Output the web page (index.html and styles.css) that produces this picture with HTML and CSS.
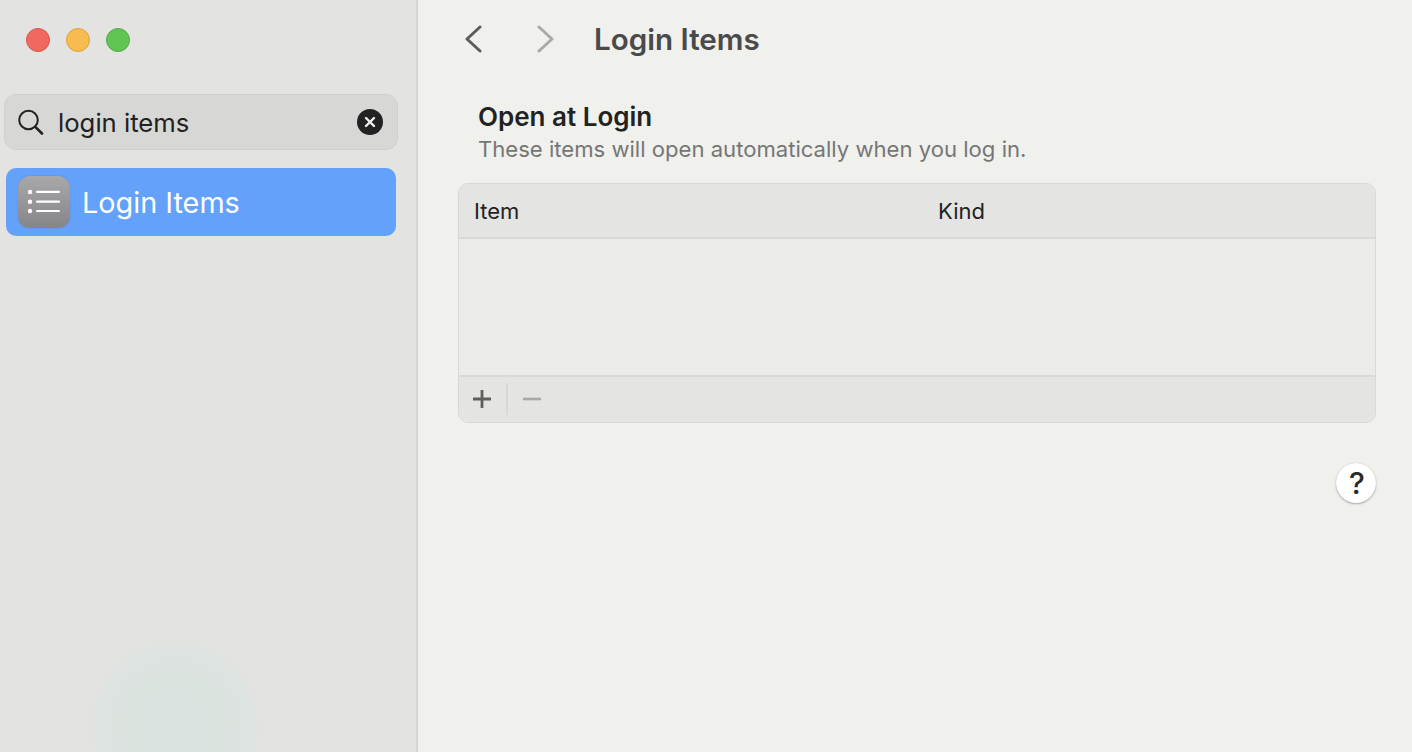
FILE: index.html
```html
<!DOCTYPE html>
<html lang="en">
<head>
<meta charset="utf-8">
<title>Login Items</title>
<link rel="stylesheet" href="styles.css">
</head>
<body>
<div class="window">
  <aside class="sidebar">
    <div class="traffic">
      <span class="light red"></span>
      <span class="light yellow"></span>
      <span class="light green"></span>
    </div>
    <div class="search">
      <svg class="search-icon" viewBox="0 0 28 28" width="28" height="28" aria-hidden="true">
        <circle cx="11.5" cy="12" r="9.3" fill="none" stroke="#222" stroke-width="2"/>
        <path d="M18.3 18.8L25 25.5" fill="none" stroke="#222" stroke-width="2.6" stroke-linecap="round"/>
      </svg>
      <span class="search-text">login items</span>
      <svg class="clear-icon" viewBox="0 0 26 26" width="26" height="26" aria-hidden="true">
        <circle cx="13" cy="13" r="13" fill="#222"/>
        <path d="M9 9L17 17M17 9L9 17" fill="none" stroke="#f2f2f2" stroke-width="2.4" stroke-linecap="round"/>
      </svg>
    </div>
    <div class="result">
      <span class="app-icon">
        <svg viewBox="0 0 52 52" width="52" height="52" aria-hidden="true">
          <g fill="#fff">
            <circle cx="12" cy="16" r="2.2"/>
            <circle cx="12" cy="25.7" r="2.2"/>
            <circle cx="12" cy="35" r="2.2"/>
            <rect x="18" y="14.8" width="24" height="2.2" rx="1"/>
            <rect x="18" y="24.6" width="24" height="2.2" rx="1"/>
            <rect x="18" y="33.9" width="24" height="2.2" rx="1"/>
          </g>
        </svg>
      </span>
      <span class="result-label">Login Items</span>
    </div>
    <div class="glow"></div>
  </aside>
  <main class="content">
    <header class="toolbar">
      <svg class="chev back" viewBox="0 0 18 28" width="18" height="28" aria-hidden="true">
        <path d="M16 2L3 14L16 26" fill="none" stroke="#5c5c5c" stroke-width="3" stroke-linecap="round" stroke-linejoin="round"/>
      </svg>
      <svg class="chev forward" viewBox="0 0 18 28" width="18" height="28" aria-hidden="true">
        <path d="M2 2L15 14L2 26" fill="none" stroke="#a9a9a7" stroke-width="3" stroke-linecap="round" stroke-linejoin="round"/>
      </svg>
      <h1 class="title">Login Items</h1>
    </header>
    <section class="section">
      <h2 class="section-title">Open at Login</h2>
      <p class="section-sub">These items will open automatically when you log in.</p>
    </section>
    <div class="table">
      <div class="table-head">
        <span class="col-item">Item</span>
        <span class="col-kind">Kind</span>
      </div>
      <div class="table-body"></div>
      <div class="table-foot">
        <span class="btn">
          <svg viewBox="0 0 20 20" width="20" height="20" aria-hidden="true"><path d="M10 1V19M1 10H19" stroke="#5e5e5e" stroke-width="2.8" fill="none"/></svg>
        </span>
        <span class="divider"></span>
        <span class="btn">
          <svg viewBox="0 0 20 20" width="20" height="20" aria-hidden="true"><path d="M1 10H19" stroke="#a8a8a6" stroke-width="2.6" fill="none"/></svg>
        </span>
      </div>
    </div>
    <div class="help-row">
      <span class="help">?</span>
    </div>
  </main>
</div>
</body>
</html>
```

FILE: styles.css
```css
* { box-sizing: border-box; }
html, body { margin: 0; padding: 0; }
body {
  width: 1412px;
  height: 752px;
  overflow: hidden;
  background: #f0f0ec;
  font-family: Inter, "Liberation Sans", sans-serif;
  color: #222;
}
.window { display: flex; width: 1412px; height: 752px; }

.sidebar {
  position: relative;
  width: 418px;
  height: 752px;
  flex: none;
  overflow: hidden;
  background: #e3e3e1;
  border-right: 2px solid #d6d6d4;
  padding: 28px 0 0 4px;
}
.traffic { display: flex; gap: 16px; padding-left: 22px; height: 24px; }
.light { width: 24px; height: 24px; border-radius: 50%; border: 1px solid; }
.red { background: #f1685e; border-color: #d9574e; }
.yellow { background: #f6bc4f; border-color: #dea23a; }
.green { background: #61c554; border-color: #4fad45; }

.search {
  display: flex;
  align-items: center;
  width: 394px;
  height: 56px;
  margin-top: 42px;
  padding: 0 14px 0 12px;
  background: #d7d7d5;
  border: 1px solid #d0d0ce;
  border-radius: 12px;
}
.search-icon { flex: none; }
.search-text {
  flex: 1;
  margin-left: 13px;
  padding-top: 2px;
  font-size: 25.7px;
  line-height: 32px;
  color: #222;
}
.clear-icon { flex: none; }

.result {
  display: flex;
  align-items: center;
  width: 390px;
  height: 68px;
  margin: 18px 0 0 2px;
  padding-left: 12px;
  background: #64a1fa;
  border-radius: 10px;
}
.app-icon {
  display: block;
  width: 52px;
  height: 52px;
  flex: none;
  border-radius: 12px;
  background: linear-gradient(#a8a8aa, #86868a);
  box-shadow: 0 0 1px rgba(60, 60, 60, 0.5);
}
.app-icon svg { display: block; }
.result-label {
  margin-left: 12px;
  padding-top: 2px;
  font-size: 28.8px;
  line-height: 36px;
  color: #fff;
}
.glow {
  position: absolute;
  left: 80px;
  top: 630px;
  width: 190px;
  height: 190px;
  border-radius: 50%;
  background: radial-gradient(circle closest-side, #dae3df 0%, #dbe3df 45%, #dde3e0 78%, #e2e3e1 92%, #e3e3e1 100%);
}

.content { flex: 1; min-width: 0; padding-left: 40px; }
.toolbar { display: flex; align-items: center; height: 78px; padding-left: 6px; }
.chev { flex: none; }
.forward { margin-left: 55px; }
.title {
  margin: 0 0 0 39px;
  font-size: 29.6px;
  font-weight: 600;
  line-height: 36px;
  color: #4a4a4a;
}
.section { padding: 22px 0 0 20px; }
.section-title {
  margin: 0;
  font-size: 26px;
  font-weight: 600;
  line-height: 33px;
  color: #222;
}
.section-sub {
  margin: 0;
  font-size: 22.1px;
  line-height: 32px;
  color: #767676;
}
.table {
  display: flex;
  flex-direction: column;
  width: 918px;
  height: 240px;
  margin-top: 18px;
  background: #ebebe9;
  border: 1px solid #d9d9d7;
  border-radius: 10px;
  overflow: hidden;
}
.table-head {
  display: flex;
  align-items: center;
  height: 55px;
  flex: none;
  background: #e4e4e2;
  border-bottom: 2px solid #d9d9d7;
  font-size: 22px;
  color: #222;
}
.col-item { width: 479px; padding-left: 15px; }
.col-kind { flex: 1; }
.table-body { flex: 1; }
.table-foot {
  display: flex;
  align-items: center;
  height: 47px;
  flex: none;
  padding: 0 0 2px 13px;
  background: #e4e4e2;
  border-top: 2px solid #d9d9d7;
}
.btn { display: block; width: 20px; height: 20px; flex: none; }
.btn svg { display: block; }
.divider {
  width: 2px;
  height: 32px;
  flex: none;
  margin: 0 14px 0 14px;
  background: #d8d8d6;
}
.help-row { display: flex; justify-content: flex-end; width: 918px; margin-top: 40px; }
.help {
  display: flex;
  align-items: center;
  justify-content: center;
  width: 40px;
  height: 40px;
  padding-left: 2px;
  border-radius: 50%;
  background: #fff;
  box-shadow: 0 1px 2px rgba(0, 0, 0, 0.3), 0 0 1px rgba(0, 0, 0, 0.2);
  font-size: 30px;
  font-weight: 500;
  color: #2a2a2a;
}
```
